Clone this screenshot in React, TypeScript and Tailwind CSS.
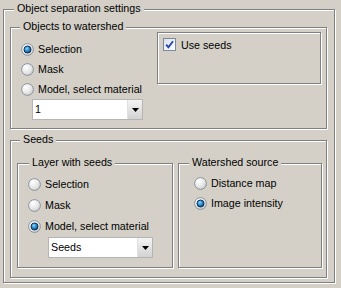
import type { ReactNode } from 'react';

const etched = 'border border-[#808080] shadow-[inset_1px_1px_0_#fff,1px_1px_0_#fff]';

function Group({ title, titleLeft, className, children }: { title: string; titleLeft: string; className: string; children?: ReactNode }) {
  return (
    <div className={`relative ${etched} ${className}`}>
      <span className={`absolute top-[-8px] ${titleLeft} bg-[#d4d0c8] px-[3px] leading-[13px] whitespace-nowrap`}>{title}</span>
      {children}
    </div>
  );
}

function Radio({ checked }: { checked?: boolean }) {
  return (
    <svg width="13" height="13" viewBox="0 0 13 13" className="shrink-0">
      <defs>
        <radialGradient id="rOff" cx="0.35" cy="0.3" r="0.8">
          <stop offset="0" stopColor="#ffffff" />
          <stop offset="0.6" stopColor="#e6e6e6" />
          <stop offset="1" stopColor="#c4c4c4" />
        </radialGradient>
        <radialGradient id="rDot" cx="0.4" cy="0.35" r="0.7">
          <stop offset="0" stopColor="#8fd6ff" />
          <stop offset="0.5" stopColor="#2a8ed0" />
          <stop offset="1" stopColor="#0b3f74" />
        </radialGradient>
      </defs>
      <circle cx="6.5" cy="6.5" r="5.9" fill="url(#rOff)" stroke="#8b939c" strokeWidth="1" />
      {checked && <circle cx="6.5" cy="6.5" r="3.5" fill="url(#rDot)" stroke="#0f2f52" strokeWidth="1" />}
    </svg>
  );
}

function RadioRow({ label, checked, h }: { label: string; checked?: boolean; h: string }) {
  return (
    <div className={`flex items-center ${h}`}>
      <Radio checked={checked} />
      <span className="ml-[4px] whitespace-nowrap">{label}</span>
    </div>
  );
}

function Checkbox() {
  return (
    <svg width="13" height="13" viewBox="0 0 13 13" className="shrink-0">
      <defs>
        <linearGradient id="cb" x1="0" y1="0" x2="1" y2="1">
          <stop offset="0" stopColor="#d9dfec" />
          <stop offset="1" stopColor="#ffffff" />
        </linearGradient>
      </defs>
      <rect x="0.5" y="0.5" width="12" height="12" fill="url(#cb)" stroke="#7f8a99" />
      <path d="M3.2 6.6 L5.4 9.2 L10 3.2" fill="none" stroke="#2546a6" strokeWidth="1.8" />
    </svg>
  );
}

function Select({ value, w }: { value: string; w: string }) {
  return (
    <div className={`flex h-[21px] ${w} border border-[#b5b5b5] bg-white`}>
      <span className="flex-1 pl-[2px] leading-[19px]">{value}</span>
      <div className="flex w-[15px] items-center justify-center border-l border-[#e0e0e0] bg-gradient-to-b from-[#f4f4f4] to-[#d2d2d2]">
        <svg width="7" height="4" viewBox="0 0 7 4">
          <path d="M0 0 H7 L3.5 4 Z" fill="#000" />
        </svg>
      </div>
    </div>
  );
}

export default function App() {
  return (
    <div
      className="h-[288px] w-[341px] bg-[#d4d0c8] pl-[3px] pt-[9px] text-[10.7px] text-black"
      style={{ fontFamily: '"Liberation Sans", Arial, sans-serif' }}
    >
      <Group title="Object separation settings" titleLeft="left-[10px]" className="h-[274px] w-[332px] pl-[6px] pt-[17px]">
        <Group title="Objects to watershed" titleLeft="left-[9px]" className="flex h-[102px] w-[317px]">
          <div className="w-[146px] pl-[10px] pt-[11px]">
            <RadioRow label="Selection" checked h="h-[20px]" />
            <RadioRow label="Mask" h="h-[20px]" />
            <RadioRow label="Model, select material" h="h-[20px]" />
            <div className="ml-[11px]">
              <Select value="1" w="w-[111px]" />
            </div>
          </div>
          <div className={`mt-[4px] h-[52px] w-[164px] ${etched} flex items-start pl-[5px] pt-[5px]`}>
            <Checkbox />
            <span className="ml-[5px] leading-[14px]">Use seeds</span>
          </div>
        </Group>
        <Group title="Seeds" titleLeft="left-[9px]" className="mt-[11px] flex h-[138px] w-[317px] pl-[6px] pt-[22px]">
          <Group title="Layer with seeds" titleLeft="left-[11px]" className="h-[105px] w-[156px] pl-[10px] pt-[10px]">
            <RadioRow label="Selection" h="h-[21px]" />
            <RadioRow label="Mask" h="h-[21px]" />
            <RadioRow label="Model, select material" checked h="h-[21px]" />
            <div className="ml-[20px]">
              <Select value="Seeds" w="w-[105px]" />
            </div>
          </Group>
          <Group title="Watershed source" titleLeft="left-[10px]" className="ml-[5px] h-[105px] w-[144px] pl-[15px] pt-[9px]">
            <RadioRow label="Distance map" h="h-[20px]" />
            <RadioRow label="Image intensity" checked h="h-[20px]" />
          </Group>
        </Group>
      </Group>
    </div>
  );
}
